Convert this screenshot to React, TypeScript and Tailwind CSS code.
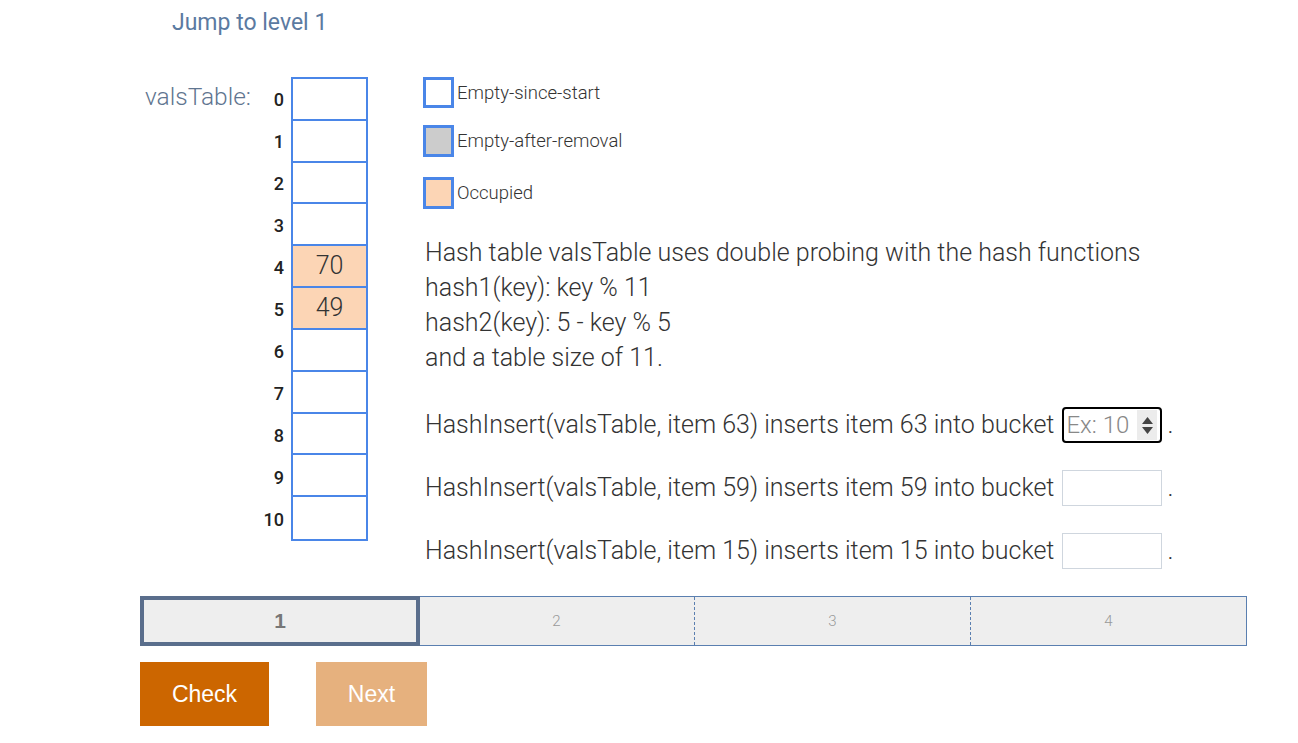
import React from 'react';

const cells = ['', '', '', '', '70', '49', '', '', '', '', ''];

const questions = [
  { item: 63, focused: true },
  { item: 59, focused: false },
  { item: 15, focused: false },
];

export default function App() {
  return (
    <div className="w-[1298px] h-[743px] bg-white overflow-hidden" style={{ fontFamily: 'Roboto, "Liberation Sans", sans-serif' }}>
      <div className="ml-[140px] w-[1107px]">
        <div className="pl-[32px] pt-[9px] h-[77px] text-[23px] leading-[28px] text-[#5b7aa1]">Jump to level 1</div>

        <div className="flex">
          {/* table */}
          <div className="flex w-[283px]">
            <div className="w-[115px] pl-[5px] pt-[4px] text-[24.5px] font-light leading-[32px] text-[#5f7590]">valsTable:</div>
            <div className="flex flex-col w-[36px] pr-[7px] pt-[1px]">
              {cells.map((_, i) => (
                <div key={i} className="h-[42px] flex items-center justify-end text-[18px] font-medium text-[#222]">
                  {i}
                </div>
              ))}
            </div>
            <div className="flex flex-col w-[77px] h-[464px] border-2 border-[#4a86e8]">
              {cells.map((v, i) => (
                <div
                  key={i}
                  className={`h-[42px] flex items-center justify-center text-[25px] font-light text-[#333] ${i < cells.length - 1 ? 'border-b-2 border-[#4a86e8]' : ''} ${v ? 'bg-[#fcd5b5]' : 'bg-white'}`}
                >
                  {v}
                </div>
              ))}
            </div>
          </div>

          {/* legend + question */}
          <div className="flex-1">
            <div className="flex flex-col">
              <div className="flex items-center h-[31px]">
                <div className="w-[31px] h-[31px] border-[3px] border-[#4a86e8] bg-white"></div>
                <span className="ml-[3px] mt-[2px] text-[18.5px] font-light text-[#333]">Empty-since-start</span>
              </div>
              <div className="flex items-center h-[32px] mt-[17px]">
                <div className="w-[31px] h-[32px] border-[3px] border-[#4a86e8] bg-[#cccccc]"></div>
                <span className="ml-[3px] mt-[2px] text-[18.5px] font-light text-[#333]">Empty-after-removal</span>
              </div>
              <div className="flex items-center h-[32px] mt-[20px]">
                <div className="w-[31px] h-[32px] border-[3px] border-[#4a86e8] bg-[#fcd5b5]"></div>
                <span className="ml-[3px] mt-[2px] text-[18.5px] font-light text-[#333]">Occupied</span>
              </div>
            </div>

            <div className="mt-[26px] ml-[2px] text-[25px] font-light leading-[35px] text-[#333]">
              <div>Hash table valsTable uses double probing with the hash functions</div>
              <div>hash1(key): key % 11</div>
              <div>hash2(key): 5 - key % 5</div>
              <div>and a table size of 11.</div>
            </div>

            <div className="mt-[32px] ml-[2px] flex flex-col gap-[27px]">
              {questions.map((q) => (
                <div key={q.item} className="flex items-center h-[36px] text-[25px] font-light text-[#333]">
                  <span>HashInsert(valsTable, item {q.item}) inserts item {q.item} into bucket</span>
                  {q.focused ? (
                    <div className="ml-[8px] w-[100px] h-[36px] border-2 border-black rounded-[4px] flex items-center bg-white">
                      <span className="pl-[2px] flex-1 text-[24px] font-light text-[#888]">Ex: 10</span>
                      <div className="w-[20px] h-[30px] mr-[3px] bg-[#ececec] flex flex-col items-center justify-center gap-[3px]">
                        <svg width="11" height="7" viewBox="0 0 11 7"><path d="M5.5 0 L11 7 L0 7 Z" fill="#444" /></svg>
                        <svg width="11" height="7" viewBox="0 0 11 7"><path d="M0 0 L11 0 L5.5 7 Z" fill="#444" /></svg>
                      </div>
                    </div>
                  ) : (
                    <div className="ml-[8px] w-[100px] h-[36px] border border-[#cfd6de] bg-white"></div>
                  )}
                  <span className="ml-[5px]">.</span>
                </div>
              ))}
            </div>
          </div>
        </div>

        {/* levels */}
        <div className="mt-[27px] flex h-[50px] border border-[#5a7fb0] bg-[#eeeeee]">
          <div className="w-[280px] -m-[1px] h-[50px] border-4 border-[#5a6e8c] flex items-center justify-center text-[21px] font-bold text-[#777]" style={{ fontFamily: '"Liberation Sans", Arial, sans-serif' }}>1</div>
          <div className="flex-1 flex items-center justify-center text-[15px] font-light text-[#999] border-r border-dashed border-[#5a7fb0]">2</div>
          <div className="flex-1 flex items-center justify-center text-[15px] font-light text-[#999] border-r border-dashed border-[#5a7fb0]">3</div>
          <div className="flex-1 flex items-center justify-center text-[15px] font-light text-[#999]">4</div>
        </div>

        <div className="mt-[16px] flex gap-[47px]" style={{ fontFamily: '"Liberation Sans", Arial, sans-serif' }}>
          <button className="w-[129px] h-[64px] bg-[#cc6600] text-white text-[23px]">Check</button>
          <button className="w-[111px] h-[64px] bg-[#e6b17e] text-white text-[23px]">Next</button>
        </div>
      </div>
    </div>
  );
}
